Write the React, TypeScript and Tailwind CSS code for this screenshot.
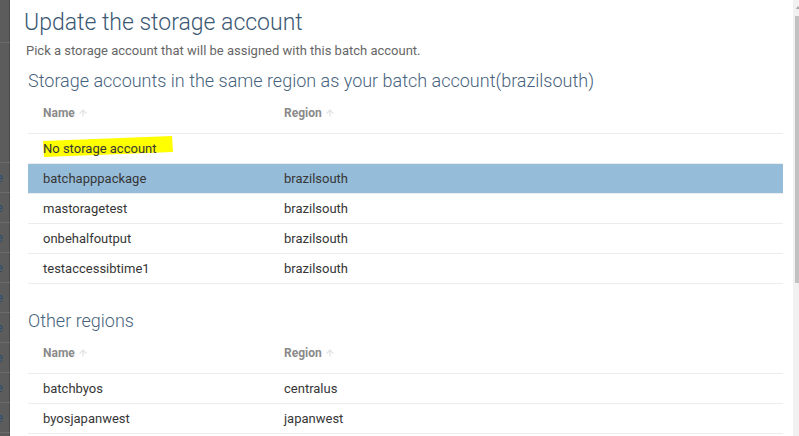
import { ArrowUp } from "lucide-react"

const sameRegion = [
  { name: "batchapppackage", region: "brazilsouth", selected: true },
  { name: "mastoragetest", region: "brazilsouth" },
  { name: "onbehalfoutput", region: "brazilsouth" },
  { name: "testaccessibtime1", region: "brazilsouth" },
]

const otherRegions = [
  { name: "batchbyos", region: "centralus" },
  { name: "byosjapanwest", region: "japanwest" },
]

function HeaderRow() {
  return (
    <div className="flex h-[41px] items-center border-b border-[#ececec] text-[12px] font-bold text-[#8a8a8a]">
      <div className="flex w-[256px] items-center gap-[3px] pl-[15px]">
        Name <ArrowUp className="size-[10px] text-[#e2e2e2]" strokeWidth={3} />
      </div>
      <div className="flex items-center gap-[3px]">
        Region <ArrowUp className="size-[10px] text-[#e2e2e2]" strokeWidth={3} />
      </div>
    </div>
  )
}

function Row({ name, region, selected }: { name: string; region: string; selected?: boolean }) {
  return (
    <div
      className={`flex h-[30px] items-center border-b border-[#ececec] text-[13px] text-[#363636] ${
        selected ? "bg-[#95bcd9]" : ""
      }`}
    >
      <div className="w-[256px] pl-[15px]">{name}</div>
      <div>{region}</div>
    </div>
  )
}

export default function App() {
  return (
    <div className="flex h-[436px] w-[799px] overflow-hidden bg-white font-['Roboto',sans-serif]">
      {/* dimmed page behind the blade */}
      <div className="flex w-[10px] shrink-0 flex-col bg-[#5c5c5c] shadow-[inset_-1px_0_0_#4a4a4a]">
        <div className="h-[43px] border-b border-[#6b6b6b]" />
        <div className="h-[120px] border-b border-[#6b6b6b]" />
        {Array.from({ length: 9 }).map((_, i) => (
          <div
            key={i}
            className="flex h-[30px] items-center overflow-hidden border-b border-[#6b6b6b] text-[13px] text-[#2b4f73]"
          >
            <span className="-ml-[4px]">e</span>
          </div>
        ))}
      </div>

      {/* blade content */}
      <div className="flex-1 pt-[10px] pr-[10px] pl-[14px]">
        <h1 className="text-[23px] leading-[26px] font-light text-[#3b5873]">Update the storage account</h1>
        <p className="mt-[6px] pl-[2px] text-[13px] leading-[17px] text-[#666]">
          Pick a storage account that will be assigned with this batch account.
        </p>

        <div className="pl-[4px]">
          <h2 className="mt-[10px] text-[18px] leading-[24px] font-light text-[#46627c]">
            Storage accounts in the same region as your batch account(brazilsouth)
          </h2>
          <HeaderRow />
          <div className="flex h-[30px] items-center border-b border-[#ececec] text-[13px] text-[#363636]">
            <div className="relative pl-[15px]">
              <svg className="absolute top-[-3px] left-[15px] h-[21px] w-[130px]" viewBox="0 0 130 21">
                <polygon points="0,5 129,0 130,16 1,21" fill="#ffff00" />
              </svg>
              <span className="relative">No storage account</span>
            </div>
          </div>
          {sameRegion.map((r) => (
            <Row key={r.name} {...r} />
          ))}

          <h2 className="mt-[25px] text-[18px] leading-[24px] font-light text-[#46627c]">Other regions</h2>
          <HeaderRow />
          {otherRegions.map((r) => (
            <Row key={r.name} {...r} />
          ))}
        </div>
      </div>

      {/* scrollbar */}
      <div className="relative w-[6px] shrink-0 bg-[#f1f1f1]">
        <div className="absolute top-[6px] left-[3px] h-0 w-0 border-x-[2px] border-b-[3px] border-x-transparent border-b-[#a3a3a3]" />
        <div className="mt-[16px] ml-[2px] h-[267px] w-[4px] bg-[#c1c1c1]" />
      </div>
    </div>
  )
}
